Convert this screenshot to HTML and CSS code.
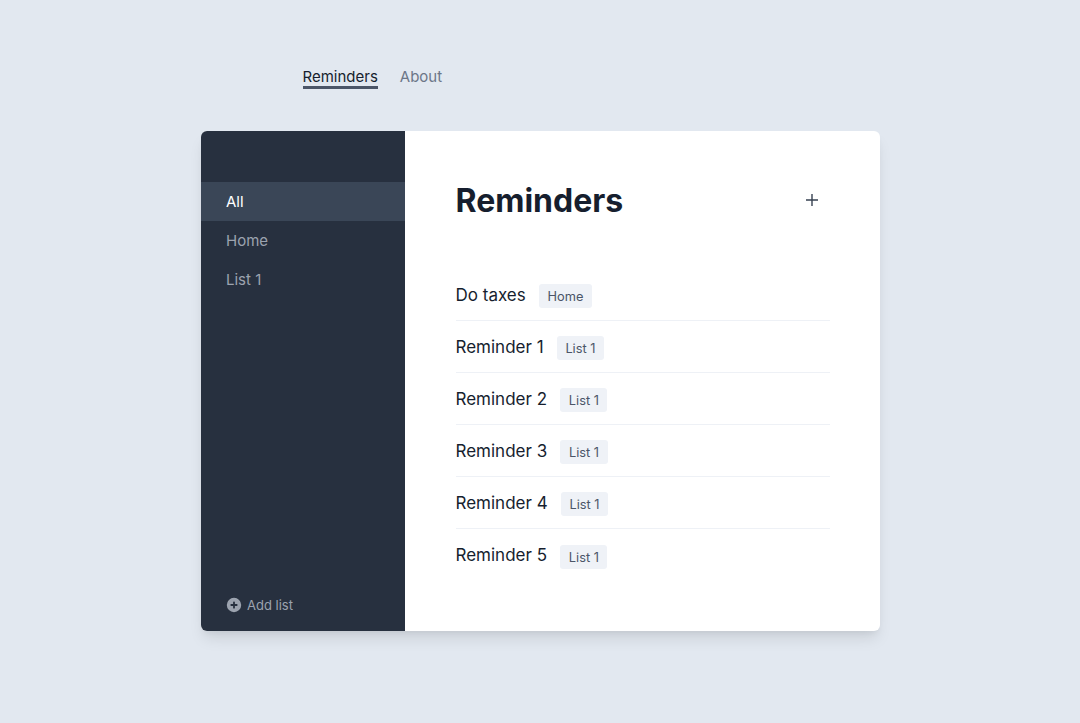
FILE: index.html
```html
<!DOCTYPE html>
<html lang="en">
<head>
    <meta charset="UTF-8">
    <title>Reminders</title>
    <link rel="stylesheet" href="styles.css">
</head>
<body>

    <div class="page">
        <nav class="topnav">
            <a class="topnav-link active">Reminders</a>
            <a class="topnav-link">About</a>
        </nav>

        <div class="card">
            <!-- Lists -->
            <aside class="sidebar">
                <ul class="lists">
                    <li class="list-item active">All</li>
                    <li class="list-item">Home</li>
                    <li class="list-item">List 1</li>
                </ul>
                <div class="add-list">
                    <svg class="add-icon" viewBox="0 0 20 20" width="18" height="18">
                        <path fill="currentColor" fill-rule="evenodd" d="M10 18a8 8 0 100-16 8 8 0 000 16zm1-11a1 1 0 10-2 0v2H7a1 1 0 100 2h2v2a1 1 0 102 0v-2h2a1 1 0 100-2h-2V7z"/>
                    </svg>
                    <span>Add list</span>
                </div>
            </aside>

            <!-- Reminders -->
            <main class="content">
                <div class="content-head">
                    <h1>Reminders</h1>
                    <svg class="plus-icon" viewBox="0 0 12 12" width="12" height="12">
                        <path d="M6 0v12M0 6h12" stroke="currentColor" stroke-width="1.4" fill="none"/>
                    </svg>
                </div>
                <ul class="reminders">
                    <li class="reminder"><span>Do taxes</span><span class="tag">Home</span></li>
                    <li class="reminder"><span>Reminder 1</span><span class="tag">List 1</span></li>
                    <li class="reminder"><span>Reminder 2</span><span class="tag">List 1</span></li>
                    <li class="reminder"><span>Reminder 3</span><span class="tag">List 1</span></li>
                    <li class="reminder"><span>Reminder 4</span><span class="tag">List 1</span></li>
                    <li class="reminder"><span>Reminder 5</span><span class="tag">List 1</span></li>
                </ul>
            </main>
        </div>
    </div>

</body>
</html>
```

FILE: styles.css
```css
* {
    box-sizing: border-box;
}
body {
    font-family: 'Inter', sans-serif;
    margin: 0;
    background-color: #e2e8f0;
    color: #161e2e;
    min-height: 100vh;
}
.page {
    width: 680px;
    margin: 0 auto;
    padding-top: 67px;
}

/* Top nav */
.topnav {
    display: flex;
    gap: 22px;
    padding-left: 102.5px;
    height: 64px;
}
.topnav-link {
    font-size: 15px;
    line-height: 19px;
    height: 22px;
    color: #6c7688;
}
.topnav-link.active {
    color: #161e2e;
    border-bottom: 3px solid #4b5567;
}

/* Card */
.card {
    display: flex;
    height: 500px;
    margin-left: 0.5px;
    background-color: #fff;
    border-radius: 6px;
    overflow: hidden;
    box-shadow: 0 10px 15px -3px rgba(0, 0, 0, 0.1), 0 4px 6px -2px rgba(0, 0, 0, 0.05);
}

/* Sidebar */
.sidebar {
    width: 204px;
    background-color: #27303f;
    padding: 51px 0 17px;
    display: flex;
    flex-direction: column;
    justify-content: space-between;
}
.lists {
    list-style-type: none;
    margin: 0;
    padding: 0;
}
.list-item {
    height: 39px;
    line-height: 39px;
    padding-left: 25.5px;
    font-size: 15px;
    color: #9ca3af;
}
.list-item.active {
    background-color: #3a4657;
    color: #fff;
}
.add-list {
    display: flex;
    align-items: center;
    gap: 4px;
    padding-left: 24.5px;
    font-size: 13px;
    color: #9ca3af;
}

/* Content */
.content {
    flex: 1;
    padding: 0 50px 0 51px;
}
.content-head {
    display: flex;
    justify-content: space-between;
    align-items: center;
    height: 138px;
    padding-right: 12.5px;
}
.content-head h1 {
    margin: 0;
    font-size: 32px;
    font-weight: 700;
    color: #161e2e;
}
.plus-icon {
    color: #374151;
}
.reminders {
    list-style-type: none;
    margin: 0;
    padding: 0;
}
.reminder {
    display: flex;
    align-items: center;
    gap: 13.3px;
    height: 52.05px;
    font-size: 17px;
    color: #161e2e;
    border-bottom: 1px solid #eef1f6;
}
.reminder:last-child {
    border-bottom: none;
}
.tag {
    font-size: 12.8px;
    line-height: 22px;
    padding: 2px 8.5px 0;
    margin-top: 3px;
    background-color: #eff2f7;
    color: #4b5567;
    border-radius: 3px;
}
```
